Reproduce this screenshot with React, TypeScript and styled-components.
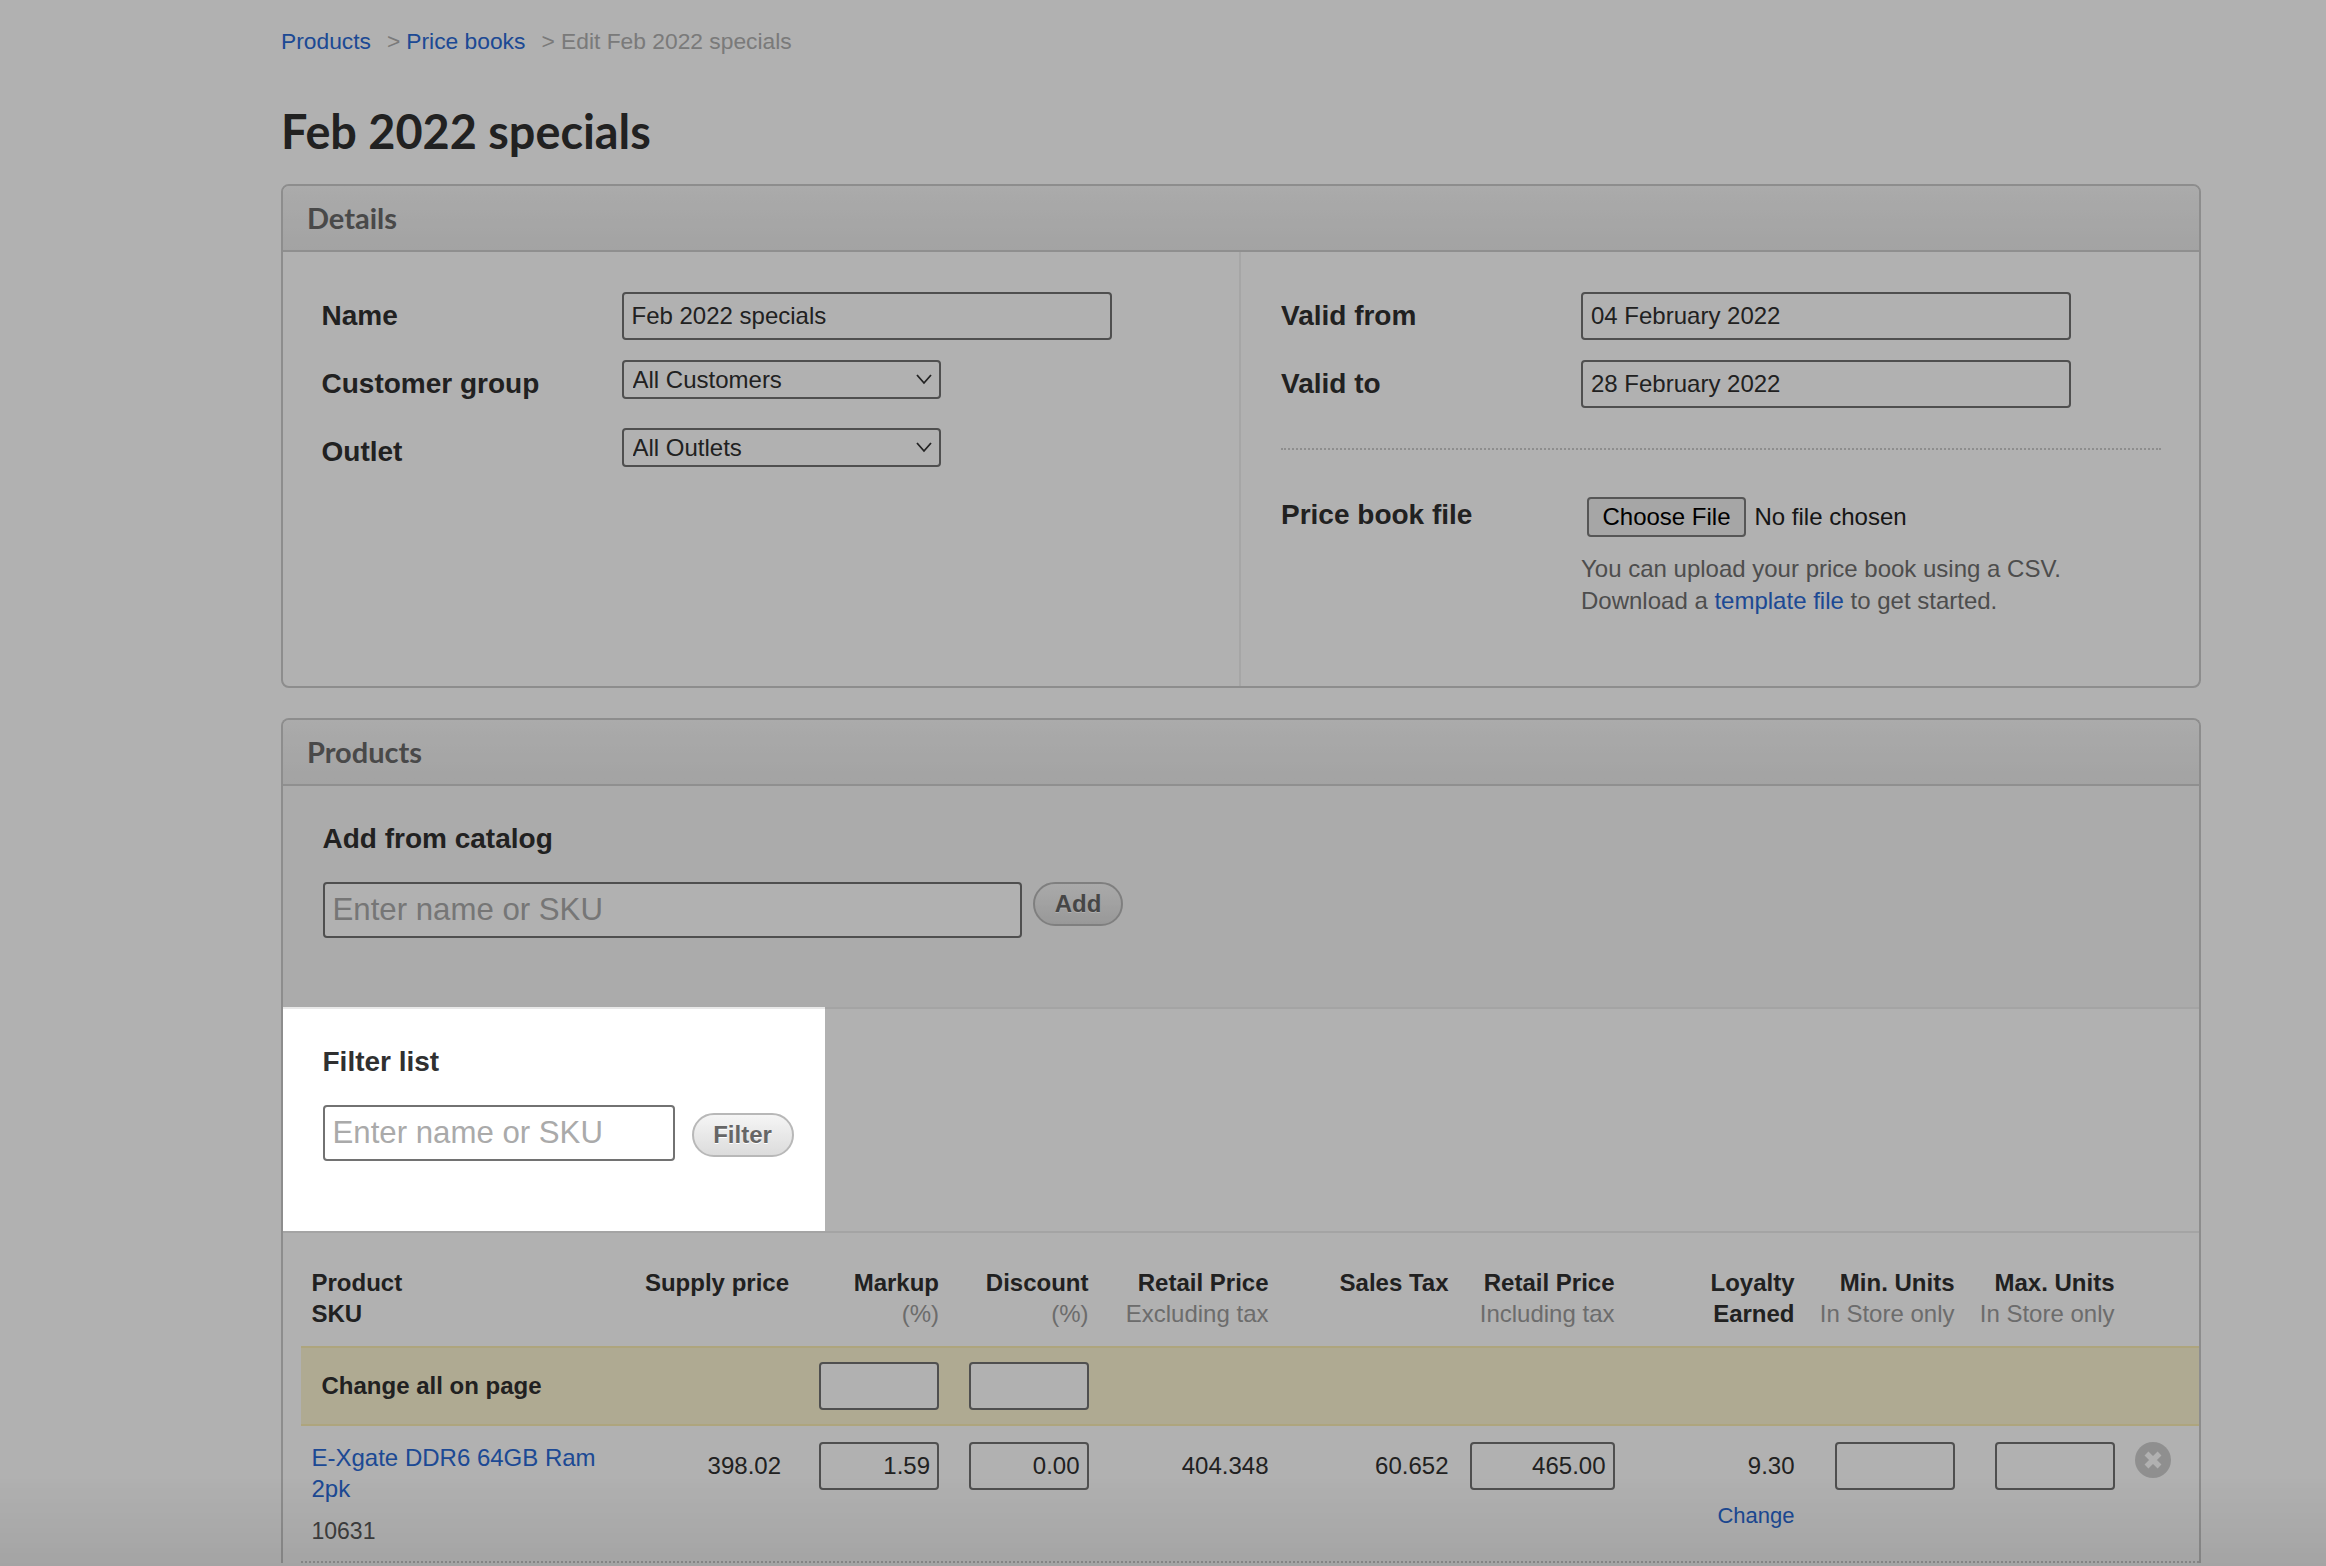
import styled, { createGlobalStyle } from 'styled-components'

const GlobalStyle = createGlobalStyle`
  html, body {
    margin: 0;
    height: 1566px;
    overflow: hidden;
    background: #fff;
  }
  body {
    font-family: 'Liberation Sans', Arial, sans-serif;
    font-size: 24px;
    color: #303030;
  }
  * {
    box-sizing: border-box;
  }
`

const columns = '339px 149.5px 150px 149.5px 180px 180px 166px 180px 160px 160px 69px'

const App = () => {
  return (
    <Page>
      <GlobalStyle />
      <Breadcrumb>
        <Link>Products</Link>
        <Crumb $gap={16}>&gt;</Crumb>
        <Link $gap={6}>Price books</Link>
        <Crumb $gap={16}>&gt; Edit Feb 2022 specials</Crumb>
      </Breadcrumb>
      <Title>Feb 2022 specials</Title>

      <Panel>
        <PanelHeader>Details</PanelHeader>
        <DetailsBody>
          <DetailsColumn>
            <FormRow>
              <FieldLabel>Name</FieldLabel>
              <TextInput $width={490} defaultValue='Feb 2022 specials' />
            </FormRow>
            <FormRow>
              <FieldLabel>Customer group</FieldLabel>
              <SelectField label='All Customers' />
            </FormRow>
            <FormRow>
              <FieldLabel>Outlet</FieldLabel>
              <SelectField label='All Outlets' />
            </FormRow>
          </DetailsColumn>
          <DetailsColumn $divided>
            <FormRow>
              <FieldLabel>Valid from</FieldLabel>
              <TextInput $width={490} defaultValue='04 February 2022' />
            </FormRow>
            <FormRow>
              <FieldLabel>Valid to</FieldLabel>
              <TextInput $width={490} defaultValue='28 February 2022' />
            </FormRow>
            <DottedRule />
            <FileRow>
              <FileLabel>Price book file</FileLabel>
              <div>
                <FilePicker>
                  <ChooseButton type='button'>Choose File</ChooseButton>
                  <span>No file chosen</span>
                </FilePicker>
                <HelpText>
                  You can upload your price book using a CSV.
                  <br />
                  Download a <HelpLink>template file</HelpLink> to get started.
                </HelpText>
              </div>
            </FileRow>
          </DetailsColumn>
        </DetailsBody>
      </Panel>

      <ProductsPanel>
        <PanelHeader>Products</PanelHeader>
        <AddSection>
          <SectionTitle>Add from catalog</SectionTitle>
          <SearchRow>
            <SearchInput $width={699} placeholder='Enter name or SKU' />
            <PillButton $width={90}>Add</PillButton>
          </SearchRow>
        </AddSection>
        <FilterSection>
          <Spotlight>
            <SectionTitle>Filter list</SectionTitle>
            <FilterRow>
              <SearchInput $width={352} placeholder='Enter name or SKU' />
              <PillButton $width={102}>Filter</PillButton>
            </FilterRow>
          </Spotlight>
        </FilterSection>

        <TableArea>
          <HeadRow>
            <HeadCell $left>
              Product
              <br />
              SKU
            </HeadCell>
            <HeadCell>Supply price</HeadCell>
            <HeadCell>
              Markup
              <SubLabel>(%)</SubLabel>
            </HeadCell>
            <HeadCell>
              Discount
              <SubLabel>(%)</SubLabel>
            </HeadCell>
            <HeadCell>
              Retail Price
              <SubLabel>Excluding tax</SubLabel>
            </HeadCell>
            <HeadCell>Sales Tax</HeadCell>
            <HeadCell>
              Retail Price
              <SubLabel>Including tax</SubLabel>
            </HeadCell>
            <HeadCell>
              Loyalty
              <br />
              Earned
            </HeadCell>
            <HeadCell>
              Min. Units
              <SubLabel>In Store only</SubLabel>
            </HeadCell>
            <HeadCell>
              Max. Units
              <SubLabel>In Store only</SubLabel>
            </HeadCell>
          </HeadRow>

          <ChangeRow>
            <ChangeLabel>Change all on page</ChangeLabel>
            <span />
            <NumberCell>
              <NumberInput $width={120} />
            </NumberCell>
            <NumberCell>
              <NumberInput $width={120} />
            </NumberCell>
          </ChangeRow>

          <ProductRow>
            <ProductCell>
              <ProductLink>E-Xgate DDR6 64GB Ram 2pk</ProductLink>
              <Sku>10631</Sku>
            </ProductCell>
            <ValueCell $inset={8}>398.02</ValueCell>
            <NumberCell>
              <NumberInput $width={120} defaultValue='1.59' />
            </NumberCell>
            <NumberCell>
              <NumberInput $width={120} defaultValue='0.00' />
            </NumberCell>
            <ValueCell>404.348</ValueCell>
            <ValueCell>60.652</ValueCell>
            <NumberCell>
              <NumberInput $width={145} defaultValue='465.00' />
            </NumberCell>
            <ValueCell>
              9.30
              <ChangeLink>Change</ChangeLink>
            </ValueCell>
            <NumberCell>
              <NumberInput $width={120} />
            </NumberCell>
            <NumberCell>
              <NumberInput $width={120} />
            </NumberCell>
            <RemoveCell>
              <RemoveIcon viewBox='0 0 36 36'>
                <circle cx='18' cy='18' r='18' fill='#cfcfcf' />
                <path d='M11.5 11.5 L24.5 24.5 M24.5 11.5 L11.5 24.5' stroke='#ffffff' strokeWidth='5.5' fill='none' />
              </RemoveIcon>
            </RemoveCell>
          </ProductRow>
        </TableArea>
      </ProductsPanel>
      <BottomFade />
    </Page>
  )
}
export default App

const SelectField = ({ label }: { label: string }) => (
  <SelectWrap>
    <NativeSelect defaultValue={label}>
      <option>{label}</option>
    </NativeSelect>
    <Chevron viewBox='0 0 18 12'>
      <path d='M2 2 L9 10 L16 2' fill='none' stroke='#333' strokeWidth='1.8' />
    </Chevron>
  </SelectWrap>
)

const Page = styled.div`
  width: 1920px;
  height: 1566px;
  margin-left: 281px;
  padding-top: 26px;
`
const Breadcrumb = styled.div`
  display: flex;
  height: 30px;
  line-height: 30px;
  font-size: 22.8px;
`
const Link = styled.a<{ $gap?: number }>`
  color: #2a6ad6;
  margin-left: ${(p) => p.$gap || 0}px;
`
const Crumb = styled.span<{ $gap: number }>`
  color: #b0b0b0;
  margin-left: ${(p) => p.$gap}px;
`
const Title = styled.h1`
  margin: 44px 0 0;
  height: 84px;
  line-height: 62px;
  font-family: Lato, sans-serif;
  font-weight: 700;
  font-size: 46.8px;
  color: #303030;
`
const Panel = styled.section`
  border: 2px solid #cbcbcb;
  border-radius: 8px;
  background: #fff;
  overflow: visible;
`
const ProductsPanel = styled(Panel)`
  margin-top: 30px;
  border-bottom: 0;
  border-radius: 8px 8px 0 0;
`
const PanelHeader = styled.h2`
  margin: 0;
  height: 66px;
  padding-left: 24px;
  line-height: 64px;
  font-family: Lato, sans-serif;
  font-weight: 700;
  font-size: 29px;
  color: #6a6a6a;
  background: linear-gradient(#f6f6f6, #ebebeb);
  border-bottom: 2px solid #cfcfcf;
  border-radius: 6px 6px 0 0;
`
const DetailsBody = styled.div`
  display: grid;
  grid-template-columns: 956px 1fr;
  height: 434px;
`
const DetailsColumn = styled.div<{ $divided?: boolean }>`
  padding: 40px 38px 0 ${(p) => (p.$divided ? 40 : 38.5)}px;
  border-left: ${(p) => (p.$divided ? '2px solid #efefef' : '0')};
`
const FormRow = styled.div`
  display: grid;
  grid-template-columns: 300px 1fr;
  height: 48px;
  margin-bottom: 20px;
`
const FieldLabel = styled.label`
  font-weight: 700;
  font-size: 28px;
  line-height: 48px;
  color: #303030;
`
const TextInput = styled.input<{ $width: number }>`
  width: ${(p) => p.$width}px;
  height: 48px;
  padding: 0 8px;
  border: 2px solid #727272;
  border-radius: 4px;
  background: #fff;
  font: 24px 'Liberation Sans', Arial, sans-serif;
  color: #303030;
`
const SelectWrap = styled.div`
  position: relative;
  width: 319px;
  height: 39px;
`
const NativeSelect = styled.select`
  width: 100%;
  height: 100%;
  padding: 0 0 0 9px;
  appearance: none;
  border: 2px solid #727272;
  border-radius: 4px;
  background: #fff;
  font: 24px 'Liberation Sans', Arial, sans-serif;
  color: #303030;
`
const Chevron = styled.svg`
  position: absolute;
  top: 13px;
  right: 8px;
  width: 18px;
  height: 12px;
`
const DottedRule = styled.hr`
  margin: 40px 0 47px;
  border: 0;
  border-top: 2px dotted #cdcdcd;
`
const FileRow = styled.div`
  display: grid;
  grid-template-columns: 300px 1fr;
`
const FileLabel = styled(FieldLabel)`
  line-height: 36px;
`
const FilePicker = styled.div`
  display: flex;
  align-items: center;
  gap: 8.5px;
  margin-left: 6px;
  height: 40px;
  color: #222;
`
const ChooseButton = styled.button`
  width: 159px;
  height: 40px;
  padding: 0;
  border: 2px solid #7c7c7c;
  border-radius: 4px;
  background: #efefef;
  font: 24px 'Liberation Sans', Arial, sans-serif;
  color: #000;
`
const HelpText = styled.p`
  margin: 15.5px 0 0;
  line-height: 32px;
  font-size: 24px;
  color: #707070;
`
const HelpLink = styled.a`
  color: #2a6ad6;
`
const AddSection = styled.div`
  height: 221px;
  padding: 35.5px 0 0 39.5px;
  background: #f6f6f6;
`
const SectionTitle = styled.h3`
  margin: 0;
  height: 34px;
  line-height: 34px;
  font-size: 28px;
  font-weight: 700;
  color: #303030;
`
const SearchRow = styled.div`
  display: flex;
  align-items: flex-start;
  gap: 11.5px;
  margin-top: 26.5px;
`
const FilterRow = styled.div`
  display: flex;
  align-items: flex-start;
  gap: 17px;
  margin-top: 26px;
`
const SearchInput = styled.input<{ $width: number }>`
  flex: none;
  width: ${(p) => p.$width}px;
  height: 56px;
  padding: 0 8px;
  border: 2px solid #727272;
  border-radius: 4px;
  background: #fff;
  font: 31.2px 'Liberation Sans', Arial, sans-serif;
  color: #303030;
  &::placeholder {
    color: #aaa;
    opacity: 1;
  }
`
const PillButton = styled.button<{ $width: number }>`
  flex: none;
  width: ${(p) => p.$width}px;
  height: 44px;
  padding: 0;
  border: 2px solid #b8b8b8;
  border-radius: 22px;
  background: linear-gradient(#f5f5f5, #dcdcdc);
  font: 700 24px 'Liberation Sans', Arial, sans-serif;
  color: #666;
  text-shadow: 0 1px 0 #fff;
  ${FilterRow} & {
    margin-top: 8px;
  }
`
const FilterSection = styled.div`
  height: 226px;
  background: #fff;
  border-top: 2px solid #ececec;
  border-bottom: 2px solid #ececec;
`
const Spotlight = styled.div`
  position: relative;
  z-index: 5;
  width: 542px;
  height: 224px;
  margin-top: -2px;
  padding: 36px 0 0 39.5px;
  background: #fff;
  border-top: 2px solid #e8e8e8;
  box-shadow: 0 0 0 4000px rgba(0, 0, 0, 0.305);
`
const TableArea = styled.div`
  padding: 34px 0 0 17.5px;
`
const HeadRow = styled.div`
  display: grid;
  grid-template-columns: ${columns};
  height: 78.5px;
`
const HeadCell = styled.div<{ $left?: boolean }>`
  padding-left: ${(p) => (p.$left ? 11 : 0)}px;
  text-align: ${(p) => (p.$left ? 'left' : 'right')};
  line-height: 31px;
  font-weight: 700;
  color: #303030;
`
const SubLabel = styled.div`
  font-weight: 400;
  color: #9c9c9c;
`
const ChangeRow = styled.div`
  display: grid;
  grid-template-columns: ${columns};
  align-items: center;
  height: 80.5px;
  background: #fdf5d3;
  border-top: 2px solid #fbeeb5;
  border-bottom: 2px solid #fbeeb5;
`
const ChangeLabel = styled.div`
  padding-left: 21px;
  font-weight: 700;
`
const NumberCell = styled.div`
  display: flex;
  justify-content: flex-end;
`
const NumberInput = styled.input<{ $width: number }>`
  width: ${(p) => p.$width}px;
  height: 48px;
  padding: 0 7px;
  border: 2px solid #727272;
  border-radius: 4px;
  background: #fff;
  text-align: right;
  font: 24px 'Liberation Sans', Arial, sans-serif;
  color: #303030;
`
const ProductRow = styled.div`
  display: grid;
  grid-template-columns: ${columns};
  height: 137px;
  padding-top: 16px;
  border-bottom: 2px dotted #cdcdcd;
`
const ProductCell = styled.div`
  padding: 0 40px 0 11px;
  line-height: 31px;
`
const ProductLink = styled.a`
  color: #2a6ad6;
`
const Sku = styled.div`
  margin-top: 11.5px;
  font-size: 23px;
  color: #5a5a5a;
`
const ValueCell = styled.div<{ $inset?: number }>`
  padding-right: ${(p) => p.$inset || 0}px;
  text-align: right;
  line-height: 48px;
`
const ChangeLink = styled.a`
  display: block;
  margin-top: 10px;
  line-height: 31px;
  font-size: 22px;
  color: #2a6ad6;
`
const RemoveCell = styled.div`
  display: flex;
  justify-content: flex-end;
  padding-right: 13px;
`
const RemoveIcon = styled.svg`
  display: block;
  width: 36px;
  height: 36px;
`
const BottomFade = styled.div`
  position: fixed;
  z-index: 10;
  left: 0;
  right: 0;
  bottom: 0;
  height: 90px;
  background: linear-gradient(rgba(0, 0, 0, 0), rgba(0, 0, 0, 0.07));
  pointer-events: none;
`
